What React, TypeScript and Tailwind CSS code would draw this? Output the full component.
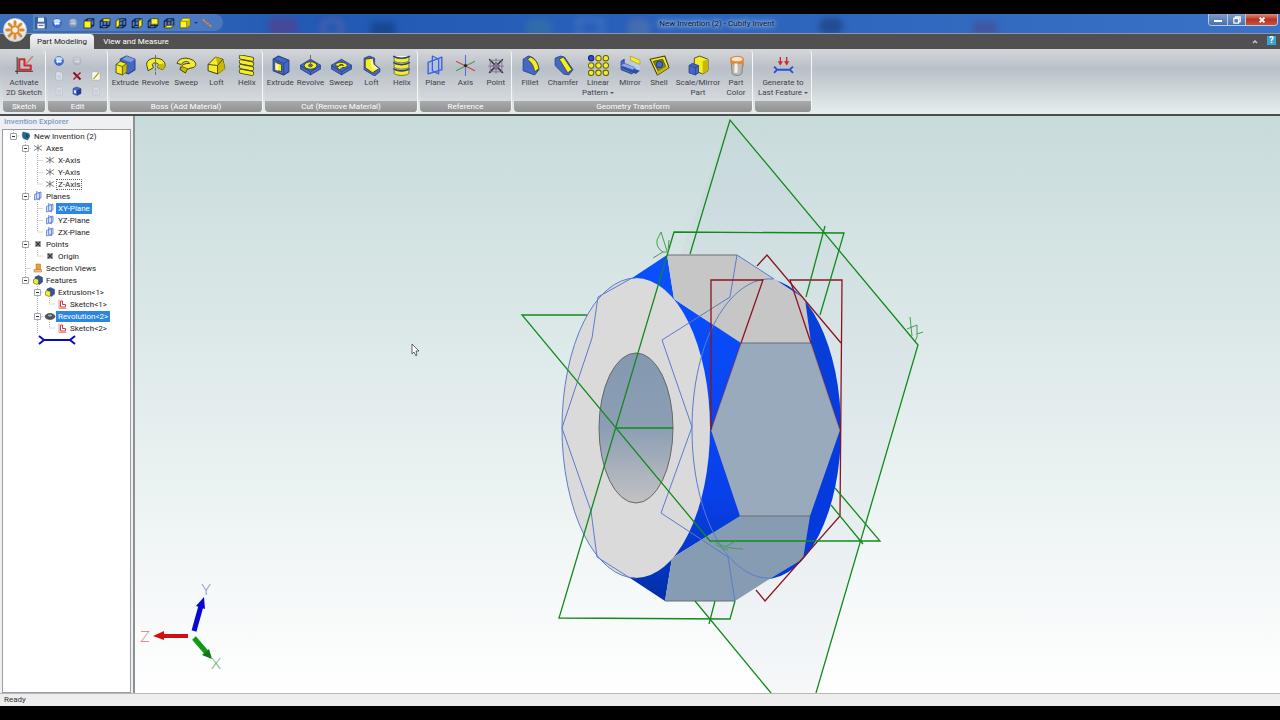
import React from 'react';

type IconProps = { className?: string };

const B = '#4468c4';
const BD = '#25408f';
const Y = '#f4ee2a';
const YD = '#c9b800';
const K = '#3c3a10';

const Svg = ({ children, className = 'w-[21px] h-[21px]' }: { children: React.ReactNode; className?: string }) => (
  <svg viewBox="0 0 20 20" className={className} fill="none" strokeLinejoin="round" aria-hidden="true">
    {children}
  </svg>
);

/* Ribbon icons */
const SketchIcon = ({ className }: IconProps) => (
  <Svg className={className}>
    <path d="M3 2v16M1 15.500h17" stroke="#333" strokeWidth="1" />
    <path d="M5 4h5v6h6v4H5z" stroke="#cc2a36" strokeWidth="2" />
    <path d="M11 9l7-8" stroke="#c98a6a" strokeWidth="1.500" />
  </Svg>
);
const ExtrudeIcon = () => (
  <Svg>
    <path d="M5 4l6-3 8 3v10l-6 4-8-3z" fill={B} stroke={BD} />
    <path d="M11 1l8 3-4 3-8-3z" fill="#7f9be4" />
    <path d="M1 9l4-3 6 2v8l-4 3-6-2z" fill={Y} stroke={K} strokeWidth=".8" />
    <path d="M11 8l-4 3v8l4-3z" fill={YD} />
    <path d="M1 9l6 2v8M7 11l4-3" stroke={K} strokeWidth=".7" />
  </Svg>
);
const RevolveIcon = () => (
  <Svg>
    <path d="M2 11C0 5 6 3 10 3s10 2 9 8l-2 3-5-2 1-3c-2-2-5-2-6 0l1 3-5 3z" fill={Y} stroke={K} strokeWidth=".9" />
    <path d="M17 14l2-3-2-3-4 1-1 3z" fill={YD} />
    <path d="M10 0v20" stroke="#666" strokeDasharray="3 1" strokeWidth=".9" />
  </Svg>
);
const SweepIcon = () => (
  <Svg>
    <path d="M1 8c1-5 8-6 13-4 6 2 6 7 2 8-4 1-6 1-7 5l-5-3c0-5 5-6 9-6-2-3-6-2-8 1z" fill={Y} stroke={K} strokeWidth=".9" />
    <path d="M4 14l2-3 5 2-2 4z" fill={YD} stroke={K} strokeWidth=".6" />
  </Svg>
);
const LoftIcon = () => (
  <Svg>
    <path d="M2 9l7-7 7 2 2 9-7 5-9-3z" fill={Y} stroke={K} strokeWidth=".9" />
    <path d="M9 2l7 2 2 9-7 5V9z" fill={YD} />
    <path d="M2 9l9 1v8M11 10l5-6" stroke={K} strokeWidth=".8" />
  </Svg>
);
const HelixIcon = () => (
  <Svg>
    {[3, 7.5, 12, 16.5].map((y) => (
      <g key={y}>
        <path d={`M5 ${y - 1}l10 2`} stroke={K} strokeWidth="4.600" strokeLinecap="round" />
        <path d={`M5 ${y - 1}l10 2`} stroke={Y} strokeWidth="3.200" strokeLinecap="round" />
      </g>
    ))}
  </Svg>
);
const CutExtrudeIcon = () => (
  <Svg>
    <path d="M3 4l5-3 10 4v11l-5 3-10-4z" fill={B} stroke={BD} />
    <path d="M3 4l10 4v11M13 8l5-3" stroke={BD} strokeWidth=".8" />
    <path d="M5 7l6 2v7l-6-2z" fill={Y} stroke={K} strokeWidth=".8" />
    <path d="M5 7l3 3v5l-3-1z" fill="#fff9b0" />
  </Svg>
);
const CutPlate = ({ children }: { children: React.ReactNode }) => (
  <Svg>
    <path d="M0 10l10-6 10 6v3l-10 6-10-6z" fill={B} stroke={BD} strokeWidth=".8" />
    <path d="M0 10l10 6 10-6M10 16v3" stroke={BD} strokeWidth=".8" />
    {children}
  </Svg>
);
const CutRevolveIcon = () => (
  <CutPlate>
    <ellipse cx="10" cy="10" rx="6" ry="3.500" fill={Y} stroke={K} strokeWidth=".8" />
    <ellipse cx="10" cy="10" rx="2" ry="1.300" fill={B} stroke={K} strokeWidth=".6" />
    <path d="M10 0v9" stroke="#667" strokeWidth=".9" />
  </CutPlate>
);
const CutSweepIcon = () => (
  <CutPlate>
    <path d="M4 10c1-3 6-4 10-2 3 2 1 4-3 4l-3 2-2-2c2-2 3-3 6-2-2-2-4-1-5 1z" fill={Y} stroke={K} strokeWidth=".8" />
  </CutPlate>
);
const CutLoftIcon = () => (
  <Svg>
    <path d="M3 3l5-2 5 2v6l5 4v3l-5 4-10-6z" fill={B} stroke={BD} strokeWidth=".8" />
    <path d="M4 4l7-1 1 6 5 4-6 4-7-5z" fill={Y} stroke={K} strokeWidth=".8" />
    <path d="M11 3l1 6 5 4-6 1-2-7z" fill="#fbf79a" />
  </Svg>
);
const CutHelixIcon = () => (
  <Svg>
    <path d="M3 1h14v18H3z" fill="#f5f5d8" />
    {[2, 8, 14].map((y) => (
      <g key={y}>
        <path d={`M3 ${y}q7 3 14 0v4q-7 3-14 0z`} fill={Y} stroke={K} strokeWidth=".6" />
        <path d={`M2 ${y - 1}q8 4 16 0`} stroke={BD} strokeWidth="1.300" />
      </g>
    ))}
  </Svg>
);
const PlaneIcon = ({ className }: IconProps) => (
  <Svg className={className}>
    <path d="M3 7l13-5v12L3 18z" stroke="#3a62d8" strokeWidth="1.300" fill="#a9bff2" fillOpacity=".5" />
    <path d="M7 1v14l6 3V4z" stroke="#3a62d8" strokeWidth="1.200" />
  </Svg>
);
const AxisIcon = () => (
  <Svg>
    <path d="M10 0v20" stroke="#5a6fc4" strokeWidth="1" />
    <path d="M1 6l18 9" stroke="#cc4444" strokeWidth="1" />
    <path d="M1 15l18-9" stroke="#4a9a5a" strokeWidth="1" />
    <circle cx="10" cy="10" r="1.500" fill="#222" />
  </Svg>
);
const PointIcon = () => (
  <Svg>
    <path d="M4 4l13 13M17 4L4 17" stroke="#333" strokeWidth="1.500" />
    <path d="M5 5h11v11H5z" stroke="#7b6a9a" strokeWidth=".8" />
    <path d="M10.500 3v15M3 10.500h15" stroke="#7b6a9a" strokeWidth=".8" />
    <circle cx="10.500" cy="10.500" r="3" stroke="#555" strokeWidth=".8" fill="#998ab0" fillOpacity=".5" />
  </Svg>
);
const FilletIcon = () => (
  <Svg>
    <path d="M3 4l5-3c6 1 9 6 10 13l-4 5-11-4z" fill={B} stroke={BD} strokeWidth=".8" />
    <path d="M7 4l3-2c5 2 7 6 8 11l-4 3C13 10 11 7 7 4z" fill={Y} stroke={K} strokeWidth=".7" />
  </Svg>
);
const ChamferIcon = () => (
  <Svg>
    <path d="M2 3l5-2 4 1 8 12-4 5-5-1-8-8z" fill={B} stroke={BD} strokeWidth=".8" />
    <path d="M6 4l4-2 8 12-4 3z" fill={Y} stroke={K} strokeWidth=".7" />
  </Svg>
);
const PatternIcon = () => (
  <Svg>
    {[3, 10, 17].map((cy) =>
      [3, 10, 17].map((cx) => (
        <circle key={`${cx}-${cy}`} cx={cx} cy={cy} r="2.600" fill={cx + cy === 6 ? '#2b4dc0' : Y} stroke={cx + cy === 6 ? '#182a70' : '#6b6410'} />
      ))
    )}
  </Svg>
);
const MirrorIcon = () => (
  <Svg>
    <path d="M10 1l9 4v10l-9-4z" fill="#b9cdf0" />
    <path d="M10 1l9 4v4l-9-4z" fill={Y} stroke="#a99a20" strokeWidth=".7" />
    <path d="M1 6l3-2v4l10 4v4l-3 2-10-4z" fill={B} stroke={BD} strokeWidth=".8" />
    <path d="M1 12l3-2 15 5-4 3z" fill="#2f4f9e" />
    <path d="M1 10l3-2 11 4-3 2z" fill="#8aa6e6" />
  </Svg>
);
const ShellIcon = () => (
  <Svg>
    <path d="M1 4l14-3 4 11-11 7z" fill={Y} stroke={K} />
    <path d="M4 6l9-2 3 7-7 5z" fill="#8a8420" stroke={K} strokeWidth=".7" />
    <path d="M8 16l8-5 3 1-11 7z" fill={YD} />
    <circle cx="10" cy="9" r="3" fill={B} stroke={BD} />
  </Svg>
);
const ScaleIcon = () => (
  <Svg>
    <path d="M6 3l5-2 8 3v11l-5 3-8-3z" fill={Y} stroke={K} strokeWidth=".8" />
    <path d="M14 6l5-2v11l-5 3z" fill={YD} />
    <path d="M1 10l3-2 6 2v7l-3 2-6-2z" fill={B} stroke={BD} strokeWidth=".8" />
    <path d="M1 10l6 2v7M7 12l3-2" stroke={BD} strokeWidth=".7" />
  </Svg>
);
const ColorIcon = () => (
  <Svg>
    <path d="M5 8h11l-1 10c-3 2-6 2-9 0z" fill="#b7b9bd" stroke="#777" strokeWidth=".8" />
    <path d="M4 3c4-3 10-3 13 0v8l-3-3-3 1-2 6-2-6-3-1z" fill="#e08a3a" />
    <ellipse cx="10.500" cy="4" rx="5" ry="2" fill="#f5e6d5" />
    <path d="M8 8h3v9H8z" fill="#f2f2f2" />
  </Svg>
);
const GenerateIcon = () => (
  <Svg>
    <path d="M7 2v7M13 2v7" stroke="#cc2a36" strokeWidth="1.300" />
    <path d="M4.500 6h5L7 10zM10.500 6h5L13 10z" fill="#cc2a36" />
    <path d="M1 11l3 3-3 3M19 11l-3 3 3 3M4 14h12" stroke="#2b4fd0" strokeWidth="1.800" />
  </Svg>
);

/* Small icons */
const DiskIcon = () => (
  <Svg className="w-3 h-3">
    <path d="M1 1h16l2 2v16H1z" fill="#3a68ac" stroke="#1c3c70" />
    <path d="M5 1h10v7H5z" fill="#e8f0fa" />
    <path d="M4 11h12v8H4z" fill="#f4f4f4" />
    <path d="M6 14h8" stroke="#557" strokeWidth="1.500" />
  </Svg>
);
const UndoIcon = () => (
  <Svg className="w-2.5 h-2.5">
    <circle cx="10" cy="10" r="9" fill="#3f6fd6" stroke="#2c55b0" />
    <ellipse cx="10" cy="6" rx="7" ry="4" fill="#c8dcff" />
    <path d="M4 11l4-3v2h7v3H8v2z" fill="#fff" />
  </Svg>
);
const RedoIcon = () => (
  <Svg className="w-2.5 h-2.5">
    <circle cx="10" cy="10" r="9" fill="#a2a8b2" fillOpacity=".5" />
    <ellipse cx="10" cy="6" rx="6" ry="4" fill="#d8dce2" fillOpacity=".5" />
    <path d="M16 11l-4-3v2H5v3h7v2z" fill="#e8eaee" fillOpacity=".7" />
  </Svg>
);
const viewFaces = [
  { name: 'Front view', d: 'M2 7h11v11H2z' },
  { name: 'Back view', d: 'M7 3h11v4H7z' },
  { name: 'Left view', d: 'M2 7l5-4v11l-5 4z' },
  { name: 'Right view', d: 'M13 7l5-4v11l-5 4z' },
  { name: 'Top view', d: 'M7 3h11v9H7z' },
  { name: 'Bottom view', d: 'M2 18l5-4h11l-5 4z' },
];
const CubeIcon = ({ d }: { d: string }) => (
  <Svg className="w-3 h-3">
    <path d="M2 7h11v11H2zM7 3h11v11M2 7l5-4M13 7l5-4M13 18l5-4M7 3v11h11M2 18l5-4" stroke="#16244a" strokeWidth="1.800" />
    <path d={d} fill="#fdf51c" stroke="#5c5a12" strokeWidth="1" />
  </Svg>
);
const IsoIcon = () => (
  <Svg className="w-3 h-3">
    <path d="M2 7l5-5h11v11l-5 5H2z" fill="#fdf51c" stroke="#4b4a10" />
    <path d="M13 7l5-5v11l-5 5z" fill="#d0c000" />
    <path d="M2 7h11v11" stroke="#4b4a10" />
  </Svg>
);
const RulerIcon = () => (
  <Svg className="w-3 h-3">
    <path d="M1 5l3-3 15 13-3 3z" fill="#a98f86" stroke="#6f6672" />
    <path d="M6 7l2-2M9 10l2-2M12 13l2-2" stroke="#4c4660" />
  </Svg>
);
const DeleteIcon = () => (
  <Svg className="w-2.5 h-2.5">
    <path d="M3 3l14 14" stroke="#7c1220" strokeWidth="4" />
    <path d="M17 3L3 17" stroke="#a81c2c" strokeWidth="3" />
  </Svg>
);
const PageIcon = ({ className }: IconProps) => (
  <Svg className={className}>
    <path d="M4 2h9l4 4v12H4z" fill="#dfe3ea" stroke="#a3aab8" />
    <path d="M7 8h7M7 11h7M7 14h7" stroke="#9aaac8" />
  </Svg>
);
const EditPageIcon = () => (
  <Svg className="w-2.5 h-2.5">
    <path d="M2 2h16v16H2z" fill="#fbfbf4" stroke="#a8a8a0" />
    <path d="M5 16L16 3" stroke="#b8a030" strokeWidth="2.500" />
  </Svg>
);
const BoxIcon = () => (
  <Svg className="w-2.5 h-2.5">
    <path d="M2 5l7-3 9 3v10l-8 4-8-3z" fill={B} stroke={BD} />
    <path d="M10 9l8-4v10l-8 4z" fill={BD} />
    <path d="M4 8l4 1v6l-4-1z" fill="#dde6ff" />
  </Svg>
);

/* Tree icons */
const PartIcon = () => (
  <Svg className="w-2.5 h-2.5">
    <path d="M4 2l8 2c5 0 6 4 5 8l-4 6-8-3c-3-4-3-8-1-13z" fill="#1f6f94" stroke="#164a6c" />
    <path d="M10 6l5 2-1 6-5-1z" fill="#164a78" />
  </Svg>
);
const AxesIcon = () => (
  <Svg className="w-2.5 h-2.5">
    <path d="M10 3v14M2 5l16 10M2 15L18 5" stroke="#555" strokeWidth="1.500" />
  </Svg>
);
const TreePlaneIcon = () => <PlaneIcon className="w-2.5 h-2.5" />;
const DotIcon = () => (
  <Svg className="w-2.5 h-2.5">
    <path d="M4 4h12v12H4z" fill="#aaaab2" />
    <path d="M6 6l8 8M14 6l-8 8" stroke="#333" strokeWidth="2.500" />
  </Svg>
);
const SectionIcon = () => (
  <Svg className="w-2.5 h-2.5">
    <path d="M6 2h9v12H6z" fill="#f0a020" stroke="#b06a10" />
    <path d="M2 13h15v5H2z" fill="#e8c890" stroke="#b5584a" />
  </Svg>
);
const FeatureIcon = () => (
  <Svg className="w-2.5 h-2.5">
    <path d="M4 4l7-3 8 4v9l-6 5-9-4z" fill="#34549c" stroke="#1e3266" />
    <path d="M1 9l4-2 6 2v8l-3 2-7-3z" fill={Y} stroke={K} />
  </Svg>
);
const RevolutionIcon = () => (
  <Svg className="w-3 h-2.5">
    <ellipse cx="10" cy="11" rx="10" ry="6" fill="#4a5a60" stroke="#222" />
    <ellipse cx="10" cy="9" rx="5" ry="3" fill="#a5b0b4" stroke="#222" />
  </Svg>
);
const TreeSketchIcon = () => (
  <Svg className="w-2.5 h-2.5">
    <path d="M4 1v18h15" stroke="#c07070" strokeWidth="1.500" />
    <path d="M7 4h4v7h6v5H7z" stroke="#d03a46" strokeWidth="2" />
  </Svg>
);

type Tool = { label: string; icon: React.ComponentType<IconProps>; width?: string; menu?: boolean };

const boss: Tool[] = [
  { label: 'Extrude', icon: ExtrudeIcon },
  { label: 'Revolve', icon: RevolveIcon },
  { label: 'Sweep', icon: SweepIcon },
  { label: 'Loft', icon: LoftIcon },
  { label: 'Helix', icon: HelixIcon },
];
const cut: Tool[] = [
  { label: 'Extrude', icon: CutExtrudeIcon },
  { label: 'Revolve', icon: CutRevolveIcon },
  { label: 'Sweep', icon: CutSweepIcon },
  { label: 'Loft', icon: CutLoftIcon },
  { label: 'Helix', icon: CutHelixIcon },
];
const reference: Tool[] = [
  { label: 'Plane', icon: PlaneIcon },
  { label: 'Axis', icon: AxisIcon },
  { label: 'Point', icon: PointIcon },
];
const geometry: Tool[] = [
  { label: 'Fillet', icon: FilletIcon, width: 'w-8' },
  { label: 'Chamfer', icon: ChamferIcon, width: 'w-[34px]' },
  { label: 'Linear\nPattern', icon: PatternIcon, width: 'w-9', menu: true },
  { label: 'Mirror', icon: MirrorIcon, width: 'w-7' },
  { label: 'Shell', icon: ShellIcon, width: 'w-[30px]' },
  { label: 'Scale/Mirror\nPart', icon: ScaleIcon, width: 'w-12' },
  { label: 'Part\nColor', icon: ColorIcon, width: 'w-7' },
];

const ToolButton = ({ label, icon: Icon, width = 'flex-1', menu }: Tool) => (
  <button type="button" className={`${width} flex flex-col items-center pt-[5px] text-[#3f434a]`}>
    <Icon />
    <span className="mt-0.5 whitespace-pre text-center leading-[10px]">
      {label}
      {menu && <span className="ml-0.5 inline-block align-middle border-x-2 border-t-2 border-x-transparent border-t-[#555]" />}
    </span>
  </button>
);

const Group = ({ title, width, children }: { title: string; width: string; children: React.ReactNode }) => (
  <section
    aria-label={title || 'Generate'}
    className={`${width} flex shrink-0 flex-col overflow-hidden rounded-sm border-r border-[#f4f6f8] bg-linear-to-b from-[#d3d6d9] via-[#b9bfc7] via-30% to-[#e0e4e6]`}
  >
    <div className="flex flex-1">{children}</div>
    <h2 className="h-[11px] bg-linear-to-b from-[#a9abad] to-[#8f9192] text-center leading-[11px] text-white">{title}</h2>
  </section>
);

type Node = {
  label: string;
  level: number;
  icon: React.ComponentType;
  guides: string; // one char per ancestor column, '|' continues
  open?: boolean;
  last?: boolean;
  state?: 'selected' | 'focused';
};

const tree: Node[] = [
  { label: 'New Invention (2)', level: 0, icon: PartIcon, guides: '', open: true, last: true },
  { label: 'Axes', level: 1, icon: AxesIcon, guides: ' ', open: true },
  { label: 'X-Axis', level: 2, icon: AxesIcon, guides: ' |' },
  { label: 'Y-Axis', level: 2, icon: AxesIcon, guides: ' |' },
  { label: 'Z-Axis', level: 2, icon: AxesIcon, guides: ' |', last: true, state: 'focused' },
  { label: 'Planes', level: 1, icon: TreePlaneIcon, guides: ' ', open: true },
  { label: 'XY-Plane', level: 2, icon: TreePlaneIcon, guides: ' |', state: 'selected' },
  { label: 'YZ-Plane', level: 2, icon: TreePlaneIcon, guides: ' |' },
  { label: 'ZX-Plane', level: 2, icon: TreePlaneIcon, guides: ' |', last: true },
  { label: 'Points', level: 1, icon: DotIcon, guides: ' ', open: true },
  { label: 'Origin', level: 2, icon: DotIcon, guides: ' |', last: true },
  { label: 'Section Views', level: 1, icon: SectionIcon, guides: ' ' },
  { label: 'Features', level: 1, icon: FeatureIcon, guides: ' ', open: true, last: true },
  { label: 'Extrusion<1>', level: 2, icon: FeatureIcon, guides: '  ', open: true },
  { label: 'Sketch<1>', level: 3, icon: TreeSketchIcon, guides: '  |', last: true },
  { label: 'Revolution<2>', level: 2, icon: RevolutionIcon, guides: '  ', open: true, state: 'selected' },
  { label: 'Sketch<2>', level: 3, icon: TreeSketchIcon, guides: '  |', last: true },
];

const labelStyle = {
  selected: 'bg-[#2d86e0] text-white',
  focused: 'outline-1 -outline-offset-1 outline-dotted outline-[#666]',
  none: '',
};

const TreeRow = ({ node }: { node: Node }) => {
  const Icon = node.icon;
  return (
    <li role="treeitem" aria-level={node.level + 1} aria-expanded={node.open} aria-selected={node.state === 'selected'} className="flex h-3 items-center">
      {node.guides.split('').map((g, i) => (
        <svg key={i} viewBox="0 0 12 12" className="h-3 w-3 shrink-0" aria-hidden="true">
          {g === '|' && <path d="M5.500 0v12" stroke="#b4b4b4" strokeDasharray="1 1" />}
        </svg>
      ))}
      <svg viewBox="0 0 12 12" className="h-3 w-3 shrink-0" fill="none" aria-hidden="true">
        <path d={node.last ? 'M5.500 0v6h6' : 'M5.500 0v12M5.500 6.500h6'} stroke="#b4b4b4" strokeDasharray="1 1" />
        {node.open && (
          <>
            <path d="M2.500 3.500h6v6h-6z" fill="#fff" stroke="#a0a4aa" />
            <path d="M4 6.500h3" stroke="#333" />
          </>
        )}
      </svg>
      <span className="flex w-3 shrink-0 justify-center">
        <Icon />
      </span>
      <span className={`h-[11px] px-0.5 leading-[11px] whitespace-nowrap ${labelStyle[node.state ?? 'none']}`}>{node.label}</span>
    </li>
  );
};

const TitleBar = () => (
  <header className="relative flex h-[19px] shrink-0 items-start overflow-hidden bg-linear-to-r from-[#3e6fb8] via-[#2159b4] via-25% to-[#3a72c6] pl-[33px]">
    {/* Desktop showing through the glass frame */}
    <div className="absolute inset-0 blur-[3px]" aria-hidden="true">
      <div className="absolute top-1 left-[21%] h-4 w-7 bg-[#5d3a86]/60" />
      <div className="absolute top-1 left-[25%] h-5 w-6 rounded-full border-4 border-[#8c6a9c]/50" />
      <div className="absolute top-2 left-[29%] h-4 w-6 bg-[#123a78]/60" />
      <div className="absolute top-1 left-[41%] h-5 w-7 rounded-full bg-[#3a7a9e]/50" />
      <div className="absolute top-1 left-[45%] h-5 w-7 border-4 border-[#5d82c6]/50" />
      <div className="absolute top-1 left-[49%] h-5 w-6 rounded-full bg-[#6d7fa6]/40" />
      <div className="absolute top-1 left-[64%] h-4 w-6 rounded-full bg-[#173a72]/60" />
      <div className="absolute top-2 left-[76%] h-3 w-6 bg-[#54407e]/50" />
    </div>
    <nav aria-label="Quick access" className="relative flex h-[17px] items-center rounded-r-full bg-white/15 pr-2">
      <button type="button" aria-label="Save" className="flex w-4 justify-center"><DiskIcon /></button>
      <button type="button" aria-label="Undo" className="flex w-4 justify-center"><UndoIcon /></button>
      <button type="button" aria-label="Redo" className="flex w-4 justify-center"><RedoIcon /></button>
      {viewFaces.map((v) => (
        <button key={v.name} type="button" aria-label={v.name} className="flex w-4 justify-center"><CubeIcon d={v.d} /></button>
      ))}
      <button type="button" aria-label="Isometric view" className="flex w-4 justify-center"><IsoIcon /></button>
      <button type="button" aria-label="More views" className="flex w-1.5 justify-center">
        <span className="border-x-2 border-t-2 border-x-transparent border-t-[#1c3c70]" />
      </button>
      <button type="button" aria-label="Measure" className="flex w-4 justify-center"><RulerIcon /></button>
    </nav>
    <h1 className="absolute top-0 left-[56%] -translate-x-1/2 px-1 text-[8px] leading-[19px] text-[#0a1630] [text-shadow:0_0_3px_#b8cef4,0_0_5px_#b8cef4,0_0_8px_#b8cef4]">
      New Invention (2) - Cubify Invent
    </h1>
    <div className="relative mr-0.5 ml-auto flex h-[12px] overflow-hidden rounded-b border border-t-0 border-[#b8cae6]">
      <button type="button" aria-label="Minimize" className="flex w-[19px] items-end justify-center border-r border-[#b8cae6] bg-linear-to-b from-[#7d9bcb] to-[#4a70ac] pb-[3px]">
        <span className="h-0.5 w-2 bg-white" />
      </button>
      <button type="button" aria-label="Restore" className="flex w-[18px] items-center justify-center border-r border-[#b8cae6] bg-linear-to-b from-[#7d9bcb] to-[#4a70ac]">
        <svg viewBox="0 0 10 10" className="h-2 w-2" fill="none" stroke="#fff" strokeWidth="1.500">
          <path d="M3 3V1h6v6H7M1 3h6v6H1z" />
        </svg>
      </button>
      <button type="button" aria-label="Close" className="flex w-[31px] items-center justify-center bg-linear-to-b from-[#d98a7c] via-[#b8321f] to-[#c8523c]">
        <svg viewBox="0 0 10 10" className="h-2 w-2" stroke="#fff" strokeWidth="2.500">
          <path d="M2 2l6 6M8 2L2 8" />
        </svg>
      </button>
    </div>
  </header>
);

const TabRow = () => (
  <div className="relative flex h-4 shrink-0 items-end border-t border-[#8a97ab] bg-[#505050] pl-[30px] text-[8px]">
    <button type="button" aria-label="Application menu" className="absolute -top-4 left-[3px] z-10 h-6 w-6 rounded-full border border-[#c3c8cf] bg-linear-to-b from-white to-[#d9dde2]">
      <svg viewBox="0 0 24 24" className="h-full w-full" fill="none" stroke="#e08a28" strokeLinecap="round">
        <circle cx="12" cy="12" r="4" strokeWidth="2" />
        <path d="M12 6V3M12 18v3M6 12H3M18 12h3M8 8L5.500 5.500M16 8l2.500-2.500M8 16l-2.500 2.500M16 16l2.500 2.500" strokeWidth="3.200" />
      </svg>
    </button>
    <button type="button" className="h-[15px] w-16 rounded-t-sm bg-linear-to-b from-[#f4f5f6] to-[#d6d9dc] whitespace-nowrap text-[#222]">Part Modeling</button>
    <button type="button" className="ml-2 h-[15px] w-[68px] whitespace-nowrap text-white">View and Measure</button>
    <button type="button" aria-label="Minimize the ribbon" className="ml-auto flex h-[15px] w-4 items-center justify-center">
      <svg viewBox="0 0 8 6" className="h-1.5 w-2" fill="none" stroke="#c8c8c8" strokeWidth="1.500"><path d="M2 4l2-2 2 2" /></svg>
    </button>
    <button type="button" aria-label="Help" className="mr-1 mb-1 ml-1 flex h-[9px] w-[9px] items-center justify-center bg-[#3aa2d6] text-[9px] leading-[9px] font-bold text-white">?</button>
  </div>
);

const Ribbon = () => (
  <div className="flex h-[67px] shrink-0 gap-0.5 border-b-2 border-[#4c4c4c] bg-linear-to-b from-[#d3d6d9] via-[#b9c1c8] via-30% to-[#e6eeee] pt-px pb-0.5 pl-[3px] text-[8px]">
    <Group title="Sketch" width="w-[43px]">
      <ToolButton label={'Activate\n2D Sketch'} icon={SketchIcon} />
    </Group>
    <Group title="Edit" width="w-[60px]">
      <div className="grid flex-1 grid-cols-3 place-items-center px-0.5 py-[3px]">
        <button type="button" aria-label="Undo"><UndoIcon /></button>
        <button type="button" aria-label="Redo"><RedoIcon /></button>
        <span />
        <button type="button" aria-label="Properties"><PageIcon className="h-2.5 w-2.5" /></button>
        <button type="button" aria-label="Delete"><DeleteIcon /></button>
        <button type="button" aria-label="Edit"><EditPageIcon /></button>
        <button type="button" aria-label="Cut" className="opacity-60"><PageIcon className="h-2.5 w-2.5" /></button>
        <button type="button" aria-label="Regenerate"><BoxIcon /></button>
        <button type="button" aria-label="Paste" className="opacity-60"><PageIcon className="h-2.5 w-2.5" /></button>
      </div>
    </Group>
    <Group title="Boss (Add Material)" width="w-[153px]">
      {boss.map((t) => <ToolButton key={t.label} {...t} />)}
    </Group>
    <Group title="Cut (Remove Material)" width="w-[153px]">
      {cut.map((t) => <ToolButton key={t.label} {...t} />)}
    </Group>
    <Group title="Reference" width="w-[92px]">
      {reference.map((t) => <ToolButton key={t.label} {...t} />)}
    </Group>
    <Group title="Geometry Transform" width="w-[239px]">
      {geometry.map((t) => <ToolButton key={t.label} {...t} />)}
    </Group>
    <Group title="" width="w-[57px]">
      <ToolButton label={'Generate to\nLast Feature'} icon={GenerateIcon} menu />
    </Group>
  </div>
);

const Explorer = () => (
  <aside className="flex w-[133px] shrink-0 flex-col bg-[#eef0f2] pr-0.5 pl-0.5 text-[8px]">
    <h2 className="h-[13px] pl-0.5 leading-3 font-medium text-[#7f9cc4]">Invention Explorer</h2>
    <ul role="tree" aria-label="Invention Explorer" className="flex-1 border border-[#9a9da2] bg-white pl-[5px] text-[#222]">
      {tree.map((node, i) => <TreeRow key={i} node={node} />)}
      <li role="none" className="pl-[30px]">
        <svg viewBox="0 0 38 12" className="h-3 w-[38px]" fill="none" stroke="#0a0ac8" strokeWidth="2" aria-hidden="true">
          <path d="M1 2l5 4-5 4M37 2l-5 4 5 4M6 6h26" />
        </svg>
      </li>
    </ul>
  </aside>
);

const Viewport = () => (
  <main className="min-w-0 flex-1 overflow-hidden border-l-2 border-[#8d9094] bg-linear-to-b from-[#c8dbdb] to-white">
    <svg viewBox="135 116 1145 577" className="block h-full w-full" fill="none" aria-label="Model view">
      <defs>
        <linearGradient id="bore" x1="0" y1="0" x2="0" y2="1">
          <stop offset="0" stopColor="#8399b0" />
          <stop offset=".5" stopColor="#8c9eb4" />
          <stop offset="1" stopColor="#c2c2c2" />
        </linearGradient>
        <linearGradient id="chamfer" x1="0" y1="0" x2="0" y2="1">
          <stop offset="0" stopColor="#0a50ff" />
          <stop offset=".7" stopColor="#0840ea" />
          <stop offset="1" stopColor="#022fa8" />
        </linearGradient>
        <linearGradient id="rear" x1="0" y1="0" x2="0" y2="1">
          <stop offset="0" stopColor="#0840d8" />
          <stop offset="1" stopColor="#0438e0" />
        </linearGradient>
      </defs>

      {/* Shaded work plane */}
      <path d="M730 120L918 345L816 693H771L559 438L616 428z" fill="#b4c4d8" fillOpacity=".12" />

      {/* Nut body */}
      <ellipse cx="766" cy="429" rx="75" ry="150" fill="url(#rear)" />
      <path d="M632 278L667 255L674 299L741 343L711 430L740 516L672 558L665 601L630 578z" fill="url(#chamfer)" />
      <path d="M667 255H737L773 278L805 299L811 343H741L674 299z" fill="#c6c6c6" />
      <path d="M741 343H811L840 430L810 516H740L711 430z" fill="#9aaabd" />
      <path d="M740 516H810L803 559L768 580L735 601H665L672 558z" fill="#869cb2" />
      <path d="M667 255H737M741 343H811M740 516H810M665 601H735" stroke="#6a6e74" />
      <ellipse cx="636" cy="428" rx="74" ry="150" fill="#dadada" />
      <ellipse cx="636" cy="428" rx="37" ry="75" fill="url(#bore)" stroke="#666" />

      {/* Hidden and silhouette edges */}
      <g stroke="#5b7ccc" strokeWidth="1">
        <path d="M636 278A74 150 0 0 0 636 578" />
        <path d="M773 279C730 276 692 340 692 429S730 582 773 578" />
        <path d="M632 278L598 297L592 338L562 428L591 511L597 557L630 578" />
        <path d="M774 279L737 255L730 297L662 340L692 427L661 513L728 557L735 601" />
      </g>

      {/* Sketch outlines */}
      <g stroke="#8c1420" strokeWidth="1.300">
        <path d="M711 430V280H763L741 343" />
        <path d="M757 266L767 255L841 343" />
        <path d="M811 343L790 280H842L840 516L765 601L756 590" />
        <path d="M741 343L711 430M811 343L840 430" strokeOpacity=".4" />
      </g>

      {/* Reference planes */}
      <g stroke="#128a1c" strokeWidth="1.300">
        <path d="M690 254L730 120L918 345L816 693M771 693L695 601" />
        <path d="M820 315L844 233L674 232L559 618L730 619L735 601" />
        <path d="M825 226L806 297M715 601L709 624" />
        <path d="M587 315H522L710 541H880L835 488M831 505L863 544" />
        <path d="M616 428H673" />
      </g>
      <g stroke="#4a9c52" strokeWidth="1">
        <path d="M667 251L661 232L657 240Q656 248 663 252L653 258M663 252H668L669 240" />
        <path d="M910 317L912 336M907 329L917 325V337L915 341M917 334L923 332" />
        <path d="M713 541Q725 549 743 549M716 545L728 550M725 547L736 541" />
      </g>

      {/* Axis triad */}
      <path d="M194 631L201 606" stroke="#0808d0" strokeWidth="5" />
      <path d="M204 597L196 606L205 609z" fill="#0808d0" />
      <path d="M188 636H164" stroke="#d01010" strokeWidth="4" />
      <path d="M153 636L164 631V640z" fill="#d01010" />
      <path d="M194 638L206 652" stroke="#109a18" strokeWidth="5" />
      <path d="M212 659L202 655L209 649z" fill="#0c7a14" />
      <g className="font-['Lato',sans-serif] text-[16px] font-light" textAnchor="middle">
        <text x="206" y="595" fill="#7c86b8">Y</text>
        <text x="145" y="642" fill="#cc8088">Z</text>
        <text x="216" y="669" fill="#5aa062">X</text>
      </g>

      {/* Pointer */}
      <path d="M412 344V354L414 352L416 356L417 355L416 351H419z" fill="#fff" stroke="#444" strokeWidth=".8" />
    </svg>
  </main>
);

const App = () => {
  return (
    <div className="flex h-screen flex-col bg-black py-3.5 font-['Roboto','Open_Sans',sans-serif]">
      <TitleBar />
      <TabRow />
      <Ribbon />
      <div className="flex min-h-0 flex-1">
        <Explorer />
        <Viewport />
      </div>
      <footer className="h-[13px] shrink-0 border-t border-[#b8b8b8] bg-[#eeeeee] pl-1 text-[8px] leading-3 text-[#333]">
        Ready
      </footer>
    </div>
  );
};

export default App;
